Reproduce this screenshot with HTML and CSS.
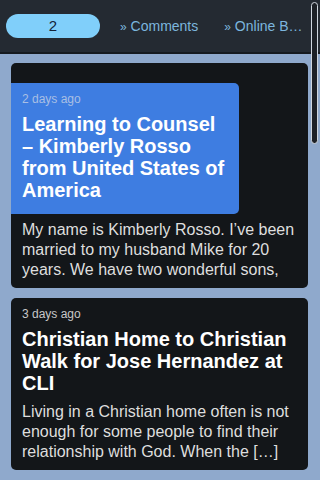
FILE: index.html
```html
<!DOCTYPE html>
<html>
<head>
<meta charset="utf-8">
<link rel="stylesheet" href="styles.css">
</head>
<body>
<div class="page">
  <header class="topbar">
    <div class="pill">2</div>
    <a class="tab"><span class="raquo">»</span> Comments</a>
    <a class="tab tab--last"><span class="raquo">»</span> Online B…</a>
  </header>
  <main class="list">
    <article class="card card--active">
      <div class="card-head">
        <div class="date">2 days ago</div>
        <h2 class="title">Learning to Counsel – Kimberly Rosso from United States of America</h2>
      </div>
      <p class="excerpt">My name is Kimberly Rosso. I’ve been married to my husband Mike for 20 years. We have two wonderful sons,</p>
    </article>
    <article class="card">
      <div class="card-head">
        <div class="date">3 days ago</div>
        <h2 class="title">Christian Home to Christian Walk for Jose Hernandez at CLI</h2>
      </div>
      <p class="excerpt">Living in a Christian home often is not enough for some people to find their relationship with God. When the […]</p>
    </article>
  </main>
  <div class="scrollbar"></div>
</div>
</body>
</html>
```
FILE: styles.css
```css
html, body {
  margin: 0;
  padding: 0;
}
body {
  background: #8fa9cc;
  font-family: "Liberation Sans", Arial, sans-serif;
  width: 320px;
  height: 480px;
  overflow: hidden;
}
.page {
  position: relative;
  height: 480px;
}
.topbar {
  height: 52px;
  background: #242a32;
  border-bottom: 2px solid #161a1f;
  display: flex;
  align-items: center;
  padding-left: 6px;
  box-sizing: content-box;
  white-space: nowrap;
  overflow: hidden;
}
.pill {
  width: 94px;
  height: 24px;
  border-radius: 12px;
  background: #80cffa;
  color: #142338;
  font-size: 15px;
  line-height: 24px;
  text-align: center;
  flex: none;
}
.tab {
  color: #7cb6de;
  font-size: 14px;
  margin-left: 20px;
  flex: none;
  line-height: 16px;
  padding-top: 1px;
}
.tab--last {
  margin-left: 26px;
}
.raquo {
  font-size: 12px;
}
.list {
  padding: 9px 12px 0 11px;
  display: flex;
  flex-direction: column;
  gap: 10px;
}
.card {
  background: #131619;
  border-radius: 5px;
  padding: 9px 11px 8px;
}
.card-head {
  display: flex;
  flex-direction: column;
}
.date {
  font-size: 12px;
  line-height: 15px;
  color: #c8c8c8;
}
.title {
  margin: 6px 0 0;
  font-size: 20px;
  line-height: 22px;
  font-weight: bold;
  color: #ffffff;
}
.excerpt {
  margin: 8px 0 0;
  font-size: 16px;
  line-height: 20px;
  color: #dedede;
}
.card--active {
  padding-top: 20px;
}
.card--active .card-head {
  background: #3e7de1;
  margin-left: -11px;
  width: 228px;
  box-sizing: border-box;
  padding: 9px 11px 13px;
  border-radius: 0 5px 5px 0;
}
.card--active .date {
  color: #a9bfe4;
}
.card--active .excerpt {
  margin-top: 6px;
}
.scrollbar {
  position: absolute;
  top: 2px;
  right: 2px;
  width: 5px;
  height: 140px;
  background: #1c2026;
  border: 1px solid #cfd6de;
  border-radius: 4px;
}
```
